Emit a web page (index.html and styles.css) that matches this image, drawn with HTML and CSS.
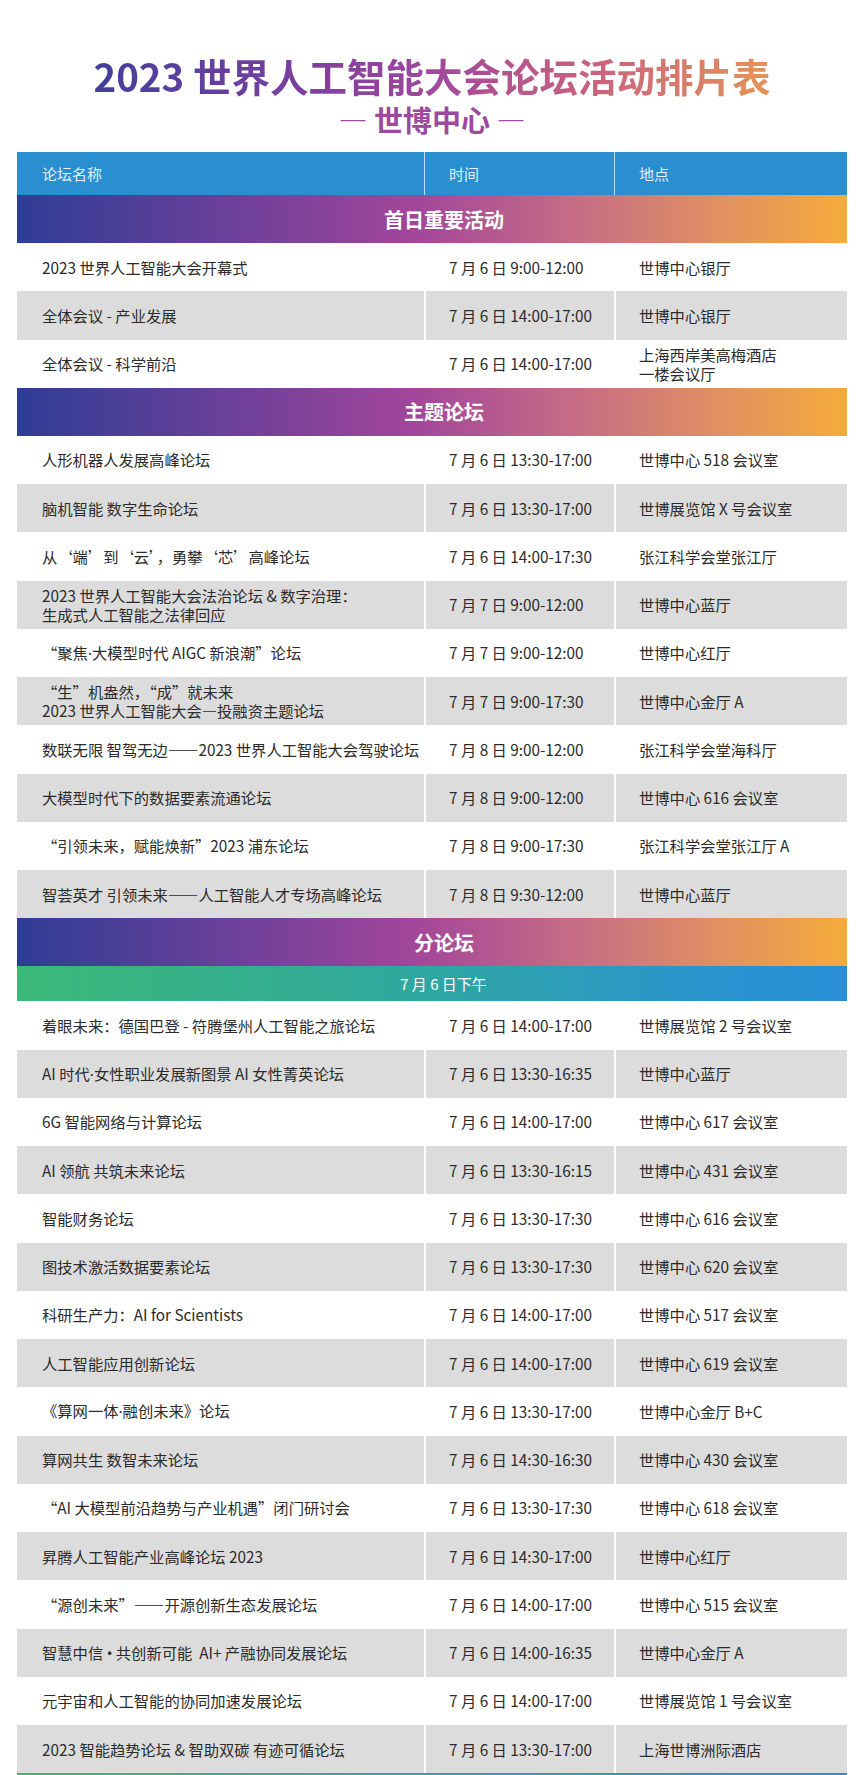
FILE: index.html
```html
<!DOCTYPE html>
<html lang="zh-CN">
<head>
<meta charset="utf-8">
<title>2023 世界人工智能大会论坛活动排片表</title>
<link rel="stylesheet" href="styles.css">
</head>
<body>
<div class="page">
  <h1 class="title">2023 世界人工智能大会论坛活动排片表</h1>
  <div class="subtitle">— 世博中心 —</div>

  <div class="table">
    <div class="row head">
      <div class="cell">论坛名称</div>
      <div class="cell">时间</div>
      <div class="cell">地点</div>
    </div>

    <div class="band">首日重要活动</div>
    <div class="row"><div class="cell">2023 世界人工智能大会开幕式</div><div class="cell">7 月 6 日 9:00-12:00</div><div class="cell">世博中心银厅</div></div>
    <div class="row alt"><div class="cell">全体会议 - 产业发展</div><div class="cell">7 月 6 日 14:00-17:00</div><div class="cell">世博中心银厅</div></div>
    <div class="row"><div class="cell">全体会议 - 科学前沿</div><div class="cell">7 月 6 日 14:00-17:00</div><div class="cell">上海西岸美高梅酒店<br>一楼会议厅</div></div>

    <div class="band">主题论坛</div>
    <div class="row"><div class="cell">人形机器人发展高峰论坛</div><div class="cell">7 月 6 日 13:30-17:00</div><div class="cell">世博中心 518 会议室</div></div>
    <div class="row alt"><div class="cell">脑机智能 数字生命论坛</div><div class="cell">7 月 6 日 13:30-17:00</div><div class="cell">世博展览馆 X 号会议室</div></div>
    <div class="row"><div class="cell">从‘端’到‘云’，勇攀‘芯’高峰论坛</div><div class="cell">7 月 6 日 14:00-17:30</div><div class="cell">张江科学会堂张江厅</div></div>
    <div class="row alt"><div class="cell">2023 世界人工智能大会法治论坛 &amp; 数字治理：<br>生成式人工智能之法律回应</div><div class="cell">7 月 7 日 9:00-12:00</div><div class="cell">世博中心蓝厅</div></div>
    <div class="row"><div class="cell"><span>“聚焦<span class="dot">·</span>大模型时代 AIGC 新浪潮”论坛</span></div><div class="cell">7 月 7 日 9:00-12:00</div><div class="cell">世博中心红厅</div></div>
    <div class="row alt"><div class="cell">“生”机盎然，“成”就未来<br>2023 世界人工智能大会—投融资主题论坛</div><div class="cell">7 月 7 日 9:00-17:30</div><div class="cell">世博中心金厅 A</div></div>
    <div class="row"><div class="cell">数联无限 智驾无边——2023 世界人工智能大会驾驶论坛</div><div class="cell">7 月 8 日 9:00-12:00</div><div class="cell">张江科学会堂海科厅</div></div>
    <div class="row alt"><div class="cell">大模型时代下的数据要素流通论坛</div><div class="cell">7 月 8 日 9:00-12:00</div><div class="cell">世博中心 616 会议室</div></div>
    <div class="row"><div class="cell">“引领未来，赋能焕新”2023 浦东论坛</div><div class="cell">7 月 8 日 9:00-17:30</div><div class="cell">张江科学会堂张江厅 A</div></div>
    <div class="row alt"><div class="cell">智荟英才 引领未来——人工智能人才专场高峰论坛</div><div class="cell">7 月 8 日 9:30-12:00</div><div class="cell">世博中心蓝厅</div></div>

    <div class="band">分论坛</div>
    <div class="subband">7 月 6 日下午</div>
    <div class="row"><div class="cell">着眼未来：德国巴登 - 符腾堡州人工智能之旅论坛</div><div class="cell">7 月 6 日 14:00-17:00</div><div class="cell">世博展览馆 2 号会议室</div></div>
    <div class="row alt"><div class="cell"><span>AI 时代<span class="dot">·</span>女性职业发展新图景 AI 女性菁英论坛</span></div><div class="cell">7 月 6 日 13:30-16:35</div><div class="cell">世博中心蓝厅</div></div>
    <div class="row"><div class="cell">6G 智能网络与计算论坛</div><div class="cell">7 月 6 日 14:00-17:00</div><div class="cell">世博中心 617 会议室</div></div>
    <div class="row alt"><div class="cell">AI 领航 共筑未来论坛</div><div class="cell">7 月 6 日 13:30-16:15</div><div class="cell">世博中心 431 会议室</div></div>
    <div class="row"><div class="cell">智能财务论坛</div><div class="cell">7 月 6 日 13:30-17:30</div><div class="cell">世博中心 616 会议室</div></div>
    <div class="row alt"><div class="cell">图技术激活数据要素论坛</div><div class="cell">7 月 6 日 13:30-17:30</div><div class="cell">世博中心 620 会议室</div></div>
    <div class="row"><div class="cell">科研生产力：AI for Scientists</div><div class="cell">7 月 6 日 14:00-17:00</div><div class="cell">世博中心 517 会议室</div></div>
    <div class="row alt"><div class="cell">人工智能应用创新论坛</div><div class="cell">7 月 6 日 14:00-17:00</div><div class="cell">世博中心 619 会议室</div></div>
    <div class="row"><div class="cell"><span>《算网一体<span class="dot">·</span>融创未来》论坛</span></div><div class="cell">7 月 6 日 13:30-17:00</div><div class="cell">世博中心金厅 B+C</div></div>
    <div class="row alt"><div class="cell">算网共生 数智未来论坛</div><div class="cell">7 月 6 日 14:30-16:30</div><div class="cell">世博中心 430 会议室</div></div>
    <div class="row"><div class="cell">“AI 大模型前沿趋势与产业机遇”闭门研讨会</div><div class="cell">7 月 6 日 13:30-17:30</div><div class="cell">世博中心 618 会议室</div></div>
    <div class="row alt"><div class="cell">昇腾人工智能产业高峰论坛 2023</div><div class="cell">7 月 6 日 14:30-17:00</div><div class="cell">世博中心红厅</div></div>
    <div class="row"><div class="cell">“源创未来”——开源创新生态发展论坛</div><div class="cell">7 月 6 日 14:00-17:00</div><div class="cell">世博中心 515 会议室</div></div>
    <div class="row alt"><div class="cell"><span>智慧中信 <span class="dot">•</span> 共创新可能&nbsp;&nbsp;AI+ 产融协同发展论坛</span></div><div class="cell">7 月 6 日 14:00-16:35</div><div class="cell">世博中心金厅 A</div></div>
    <div class="row"><div class="cell">元宇宙和人工智能的协同加速发展论坛</div><div class="cell">7 月 6 日 14:00-17:00</div><div class="cell">世博展览馆 1 号会议室</div></div>
    <div class="row alt"><div class="cell">2023 智能趋势论坛 &amp; 智助双碳 有迹可循论坛</div><div class="cell">7 月 6 日 13:30-17:00</div><div class="cell">上海世博洲际酒店</div></div>
    <div class="subband">7 月 7 日上午</div>
  </div>
</div>
</body>
</html>
```

FILE: styles.css
```css
html, body {
  margin: 0;
  padding: 0;
  background: #ffffff;
}

body {
  font-family: "Noto Sans CJK SC", "Noto Sans", "Liberation Sans", sans-serif;
  color: #2b2b2b;
}

.page {
  width: 864px;
  padding-top: 52px;
}

.title {
  margin: 0;
  text-align: center;
  font-size: 38.5px;
  line-height: 46px;
  font-weight: 700;
  background: linear-gradient(90deg, #453f9c 12%, #7c3f9f 35%, #a0489d 50%, #c8617f 68%, #e4905a 88%);
  -webkit-background-clip: text;
  background-clip: text;
  color: transparent;
}

.subtitle {
  margin-top: 5px;
  text-align: center;
  font-size: 29px;
  line-height: 32px;
  font-weight: 700;
  color: #9c4a9f;
}

.table {
  width: 830px;
  margin: 17px auto 0;
}

.row {
  display: grid;
  grid-template-columns: 407px 190px 233px;
  height: 48.25px;
  background: #ffffff;
}

.row.alt {
  background: #dcdcdc;
}

.cell {
  display: flex;
  flex-direction: column;
  justify-content: center;
  padding-left: 25px;
  font-size: 15.3px;
  line-height: 19px;
  color: #2b2b2b;
  white-space: nowrap;
}

.cell + .cell {
  border-left: 2px solid #ffffff;
  padding-left: 23px;
}

.dot {
  font-family: "Noto Sans", "Liberation Sans", sans-serif;
}

.row.head {
  height: 43px;
  background: #2a8fd1;
}

.row.head .cell {
  color: #e3effa;
  font-size: 15px;
}

.row.head .cell + .cell {
  border-left: 1px solid #bcdcf2;
  padding-left: 24px;
}

.band {
  height: 48px;
  display: flex;
  align-items: center;
  justify-content: center;
  padding-left: 24px;
  font-size: 20px;
  font-weight: 700;
  color: #ffffff;
  background: linear-gradient(90deg, #2e3d95 0%, #6a409a 25%, #a2469a 48%, #c76e84 68%, #e2935f 86%, #f5ab3a 100%);
}

.subband {
  height: 35px;
  display: flex;
  align-items: center;
  justify-content: center;
  padding-left: 23px;
  font-size: 15px;
  color: #ffffff;
  background: linear-gradient(90deg, #3cb877 0%, #2fa99c 45%, #2a93d0 85%, #2a8fd6 100%);
}
```
